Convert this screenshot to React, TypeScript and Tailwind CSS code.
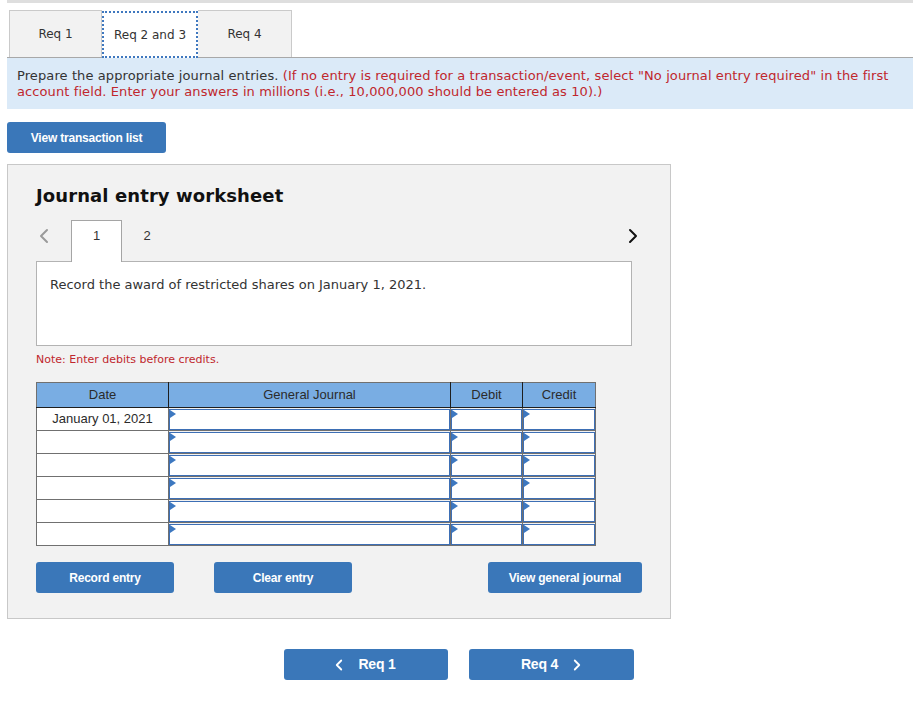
import React from 'react';

const Chevron: React.FC<{ dir: 'left' | 'right'; className?: string; stroke?: string; width?: number }> = ({
  dir,
  className = '',
  stroke = 'currentColor',
  width = 2
}) => (
  <svg viewBox="0 0 10 16" className={className} fill="none">
    <polyline
      points={dir === 'left' ? '8,2 2,8 8,14' : '2,2 8,8 2,14'}
      stroke={stroke}
      strokeWidth={width}
      strokeLinecap="round"
      strokeLinejoin="round"
    />
  </svg>
);

const InputCell: React.FC = () => (
  <td className="p-0 border border-[#707070] h-[23px]">
    <div className="relative h-[21px] border border-[#3d6fb5] bg-white">
      <span className="absolute left-0 top-0 w-0 h-0 border-y-[4px] border-y-transparent border-l-[6px] border-l-[#3d78c0]" />
    </div>
  </td>
);

const BlueButton: React.FC<{ children: React.ReactNode; className?: string }> = ({ children, className = '' }) => (
  <button
    className={`h-[31px] rounded-[3px] bg-[#3a77b9] text-white text-[12px] font-bold tracking-[-0.2px] font-['Liberation_Sans',Arial,sans-serif] flex items-center justify-center ${className}`}
  >
    {children}
  </button>
);

const App: React.FC = () => {
  const rows = ['January 01, 2021', '', '', '', '', ''];

  return (
    <div className="min-h-[727px] bg-white text-[#333] font-['DejaVu_Sans',Verdana,sans-serif]">
      <div className="ml-[7px] h-[3px] bg-[#dedede]" />

      {/* requirement tabs */}
      <div className="mt-[7px] ml-[7px] pl-[2px] flex items-end border-b border-[#a8a8a8]">
        <div className="w-[93px] h-[47px] border border-b-0 border-[#cacaca] bg-[#f2f2f2] flex items-center justify-center text-[12px]">
          Req 1
        </div>
        <div className="w-[96px] h-[47px] border-2 border-b-2 border-dotted border-[#3f78bf] bg-white flex items-center justify-center text-[12px] -mb-px">
          Req 2 and 3
        </div>
        <div className="w-[94px] h-[47px] border border-b-0 border-l-0 border-[#cacaca] bg-[#f2f2f2] flex items-center justify-center text-[12px]">
          Req 4
        </div>
      </div>

      <div className="ml-[7px] bg-[#dbeaf8] px-[10px] pt-[10px] pb-[9px] text-[13px] leading-[16px] tracking-[0.1px]">
        Prepare the appropriate journal entries.{' '}
        <span className="text-[#c0272d]">
          (If no entry is required for a transaction/event, select "No journal entry required" in the first account
          field. Enter your answers in millions (i.e., 10,000,000 should be entered as 10).)
        </span>
      </div>

      <BlueButton className="mt-[13px] ml-[7px] w-[159px]">View transaction list</BlueButton>

      {/* worksheet */}
      <div className="mt-[11px] ml-[7px] w-[664px] h-[455px] border border-[#c8c8c8] bg-[#f2f2f2] pl-[28px] pt-[19px]">
        <h2 className="text-[18px] font-bold text-[#111] leading-[24px] tracking-[0.1px]">Journal entry worksheet</h2>

        <div className="mt-[12px] w-[602px] flex items-end h-[41px]">
          <div className="w-[35px] h-[41px] flex items-center pb-[10px] pl-[3px]">
            <Chevron dir="left" className="w-[10px] h-[16px]" stroke="#9a9a9a" />
          </div>
          <div className="w-[51px] h-[42px] -mb-px border border-b-0 border-[#a5a5a5] bg-white flex items-center justify-center pb-[11px] text-[13px] font-['Liberation_Sans',Arial,sans-serif] relative z-10">
            1
          </div>
          <div className="w-[50px] h-[41px] flex items-center justify-center pb-[10px] text-[13px] font-['Liberation_Sans',Arial,sans-serif]">
            2
          </div>
          <div className="flex-1 h-[41px] flex items-center justify-end pb-[10px]">
            <Chevron dir="right" className="w-[10px] h-[16px]" stroke="#111" />
          </div>
        </div>

        <div className="w-[596px] h-[85px] border border-[#b3b3b3] bg-white pl-[13px] pt-[13px] text-[13px]">
          Record the award of restricted shares on January 1, 2021.
        </div>

        <p className="mt-[7px] text-[11px] text-[#c0272d] leading-[14px]">Note: Enter debits before credits.</p>

        <table className="mt-[15px] border-collapse font-['Liberation_Sans',Arial,sans-serif] text-[13px] text-[#2b2b2b]">
          <colgroup>
            <col className="w-[132px]" />
            <col className="w-[282px]" />
            <col className="w-[72px]" />
            <col className="w-[73px]" />
          </colgroup>
          <thead>
            <tr className="h-[25px] bg-[#79ade3]">
              <th className="font-normal border border-[#707070] border-r-[#1e1e1e] border-b-[#1e1e1e]">Date</th>
              <th className="font-normal border border-[#707070] border-r-[#1e1e1e] border-b-[#1e1e1e]">General Journal</th>
              <th className="font-normal border border-[#707070] border-r-[#1e1e1e] border-b-[#1e1e1e]">Debit</th>
              <th className="font-normal border border-[#707070] border-b-[#1e1e1e]">Credit</th>
            </tr>
          </thead>
          <tbody>
            {rows.map((d, i) => (
              <tr key={i} className="h-[23px]">
                <td className="border border-[#707070] bg-white text-center p-0">{d}</td>
                <InputCell />
                <InputCell />
                <InputCell />
              </tr>
            ))}
          </tbody>
        </table>

        <div className="mt-[16px] w-[606px] flex">
          <BlueButton className="w-[138px]">Record entry</BlueButton>
          <BlueButton className="ml-[40px] w-[138px]">Clear entry</BlueButton>
          <BlueButton className="ml-auto w-[154px]">View general journal</BlueButton>
        </div>
      </div>

      {/* requirement navigation */}
      <div className="mt-[30px] flex justify-center pl-[4px] gap-[21px] w-[913px]">
        <BlueButton className="w-[164px] text-[14px]">
          <Chevron dir="left" className="w-[8px] h-[12px] mr-[15px]" stroke="#fff" width={2.4} />
          Req 1
        </BlueButton>
        <BlueButton className="w-[165px] text-[14px]">
          Req 4
          <Chevron dir="right" className="w-[8px] h-[12px] ml-[15px]" stroke="#fff" width={2.4} />
        </BlueButton>
      </div>
    </div>
  );
};

export default App;
